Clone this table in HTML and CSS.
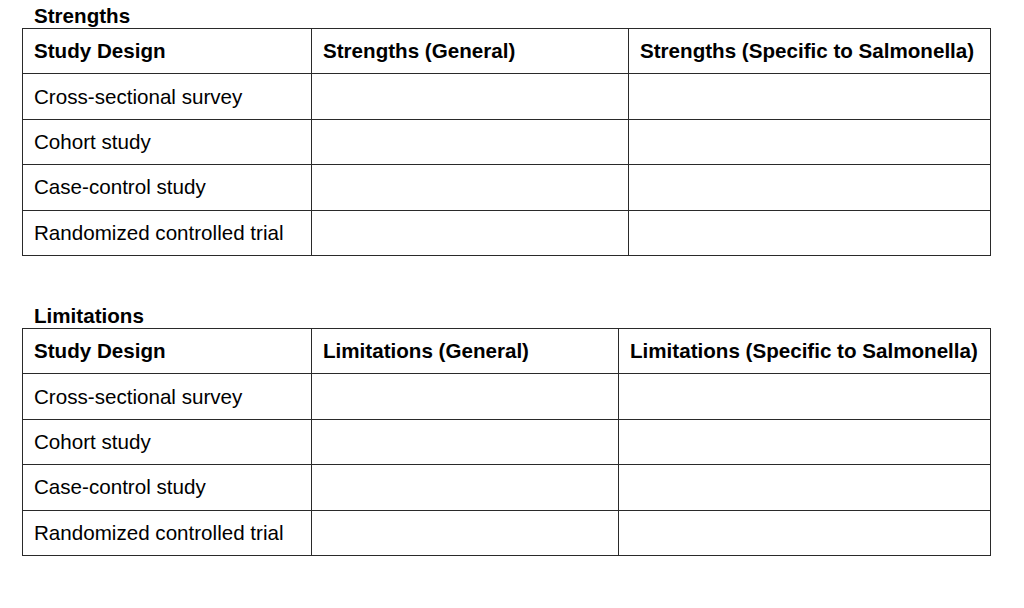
FILE: index.html
```html
<!DOCTYPE html>
<html>
<head>
<meta charset="utf-8">
<link rel="stylesheet" href="styles.css">
</head>
<body>
<div class="page">
  <section class="block">
    <h2 class="title">Strengths</h2>
    <table class="grid">
      <colgroup><col class="c1"><col class="s2"><col class="s3"></colgroup>
      <tr><th>Study Design</th><th>Strengths (General)</th><th>Strengths (Specific to Salmonella)</th></tr>
      <tr><td>Cross-sectional survey</td><td></td><td></td></tr>
      <tr><td>Cohort study</td><td></td><td></td></tr>
      <tr><td>Case-control study</td><td></td><td></td></tr>
      <tr><td>Randomized controlled trial</td><td></td><td></td></tr>
    </table>
  </section>
  <section class="block second">
    <h2 class="title">Limitations</h2>
    <table class="grid">
      <colgroup><col class="c1"><col class="l2"><col class="l3"></colgroup>
      <tr><th>Study Design</th><th>Limitations (General)</th><th>Limitations (Specific to Salmonella)</th></tr>
      <tr><td>Cross-sectional survey</td><td></td><td></td></tr>
      <tr><td>Cohort study</td><td></td><td></td></tr>
      <tr><td>Case-control study</td><td></td><td></td></tr>
      <tr><td>Randomized controlled trial</td><td></td><td></td></tr>
    </table>
  </section>
</div>
</body>
</html>
```
FILE: styles.css
```css
html, body {
  margin: 0;
  padding: 0;
  background: #fff;
}
body {
  font-family: "Liberation Sans", Arial, sans-serif;
  color: #000;
  font-size: 20.6px;
}
.page {
  padding: 4px 0 0 22px;
}
.block {
  display: flex;
  flex-direction: column;
}
.second {
  margin-top: 48px;
}
.title {
  margin: 0;
  padding-left: 12px;
  font-size: 20.6px;
  font-weight: bold;
  line-height: 24px;
}
.grid {
  border-collapse: collapse;
  table-layout: fixed;
  width: 968px;
}
.c1 { width: 289px; }
.s2 { width: 317px; }
.s3 { width: 362px; }
.l2 { width: 307px; }
.l3 { width: 372px; }
.grid th, .grid td {
  border: 1px solid #2a2a2a;
  height: 44.4px;
  padding: 0 0 0 11px;
  text-align: left;
  vertical-align: middle;
  white-space: nowrap;
  line-height: 24px;
}
.grid th {
  font-weight: bold;
}
```
